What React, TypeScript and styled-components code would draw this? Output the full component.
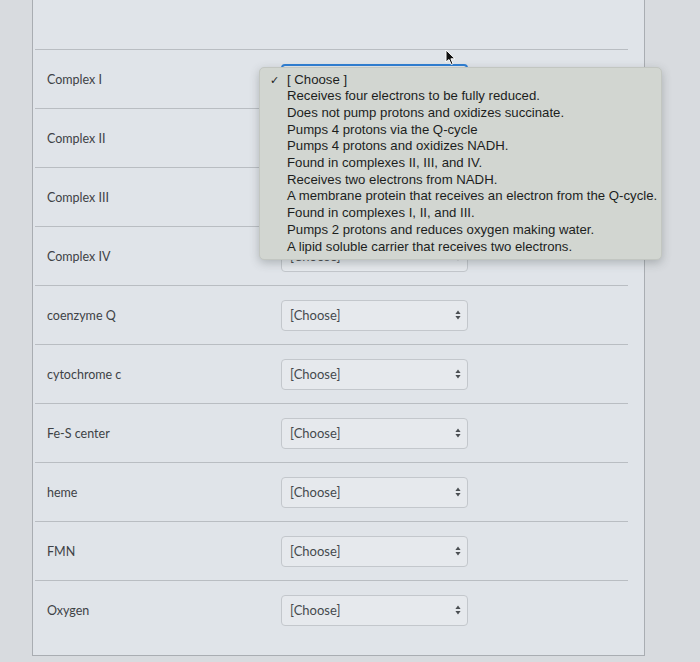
import React from "react";
import styled, { createGlobalStyle } from "styled-components";

const GlobalStyle = createGlobalStyle`
  html, body {
    margin: 0;
    padding: 0;
    background: #d8dbdf;
    font-family: Lato, "Liberation Sans", sans-serif;
  }
`;

const Page = styled.div`
  position: relative;
  width: 700px;
  height: 662px;
  overflow: hidden;
  padding-left: 32px;
  box-sizing: border-box;
`;

const Panel = styled.div`
  width: 613px;
  height: 656px;
  box-sizing: border-box;
  background: #e0e4e9;
  border: 1px solid #a9adb2;
  border-top: none;
  padding: 49px 16px 0 2px;
`;

const Row = styled.div`
  position: relative;
  display: flex;
  align-items: center;
  height: 58px;
  border-top: 1px solid #b9bdc2;
`;

const Label = styled.div`
  width: 234px;
  padding-left: 12px;
  font-size: 12.5px;
  color: #3e4246;
`;

const Select = styled.div<{ $focused?: boolean }>`
  position: relative;
  width: 187px;
  height: 31px;
  box-sizing: border-box;
  display: flex;
  align-items: center;
  justify-content: space-between;
  padding: 0 6px 0 8px;
  border: ${(p) => (p.$focused ? "2px solid #2f7fd4" : "1px solid #c3c7cc")};
  border-radius: 4px;
  background: #e6e9ed;
  font-size: 13px;
  color: #45494d;
`;

const Arrows = styled.svg`
  margin-left: auto;
  width: 6px;
  height: 10px;
`;

const Popup = styled.div`
  position: absolute;
  left: -24px;
  top: 1px;
  z-index: 2;
  width: 403px;
  box-sizing: border-box;
  padding: 4px 0 4px 27px;
  background: #d2d6d1;
  border: 1px solid #c2c6c1;
  border-radius: 5px;
  box-shadow: 0 3px 10px rgba(60, 70, 70, 0.3);
  font-family: "Liberation Sans", Arial, sans-serif;
  font-size: 13.2px;
  color: #1c1e1d;
`;

const Option = styled.div`
  position: relative;
  line-height: 16.7px;
  white-space: nowrap;
`;

const Check = styled.span`
  position: absolute;
  left: -17px;
  top: 0;
  font-size: 11px;
`;

const Cursor = styled.svg`
  position: absolute;
  left: 445px;
  top: 49px;
  z-index: 3;
  width: 12px;
  height: 17px;
`;

const labels = [
  "Complex I",
  "Complex II",
  "Complex III",
  "Complex IV",
  "coenzyme Q",
  "cytochrome c",
  "Fe-S center",
  "heme",
  "FMN",
  "Oxygen",
];

const options = [
  "Receives four electrons to be fully reduced.",
  "Does not pump protons and oxidizes succinate.",
  "Pumps 4 protons via the Q-cycle",
  "Pumps 4 protons and oxidizes NADH.",
  "Found in complexes II, III, and IV.",
  "Receives two electrons from NADH.",
  "A membrane protein that receives an electron from the Q-cycle.",
  "Found in complexes I, II, and III.",
  "Pumps 2 protons and reduces oxygen making water.",
  "A lipid soluble carrier that receives two electrons.",
];

function UpDown() {
  return (
    <Arrows viewBox="0 0 6 10">
      <path d="M3 0.5 L5.6 4 L0.4 4 Z M3 9.5 L5.6 6 L0.4 6 Z" fill="#4a4e52" />
    </Arrows>
  );
}

export default function App() {
  return (
    <>
      <GlobalStyle />
      <Page>
        <Panel>
          {labels.map((label, i) => (
            <Row key={label}>
              <Label>{label}</Label>
              <Select $focused={i === 0}>
                {/* the open menu hides the values of the first three selects */}
                {i > 2 && <span>[Choose]</span>}
                <UpDown />
                {i === 0 && (
                  <Popup>
                    <Option>
                      <Check>✓</Check>[ Choose ]
                    </Option>
                    {options.map((o) => (
                      <Option key={o}>{o}</Option>
                    ))}
                  </Popup>
                )}
              </Select>
            </Row>
          ))}
        </Panel>
        <Cursor viewBox="0 0 12 17">
          <path
            d="M1 1 L1 13 L4 10.5 L6.2 15.5 L8 14.7 L5.9 9.8 L10 9.8 Z"
            fill="#111"
            stroke="#fff"
            strokeWidth="1"
          />
        </Cursor>
      </Page>
    </>
  );
}
